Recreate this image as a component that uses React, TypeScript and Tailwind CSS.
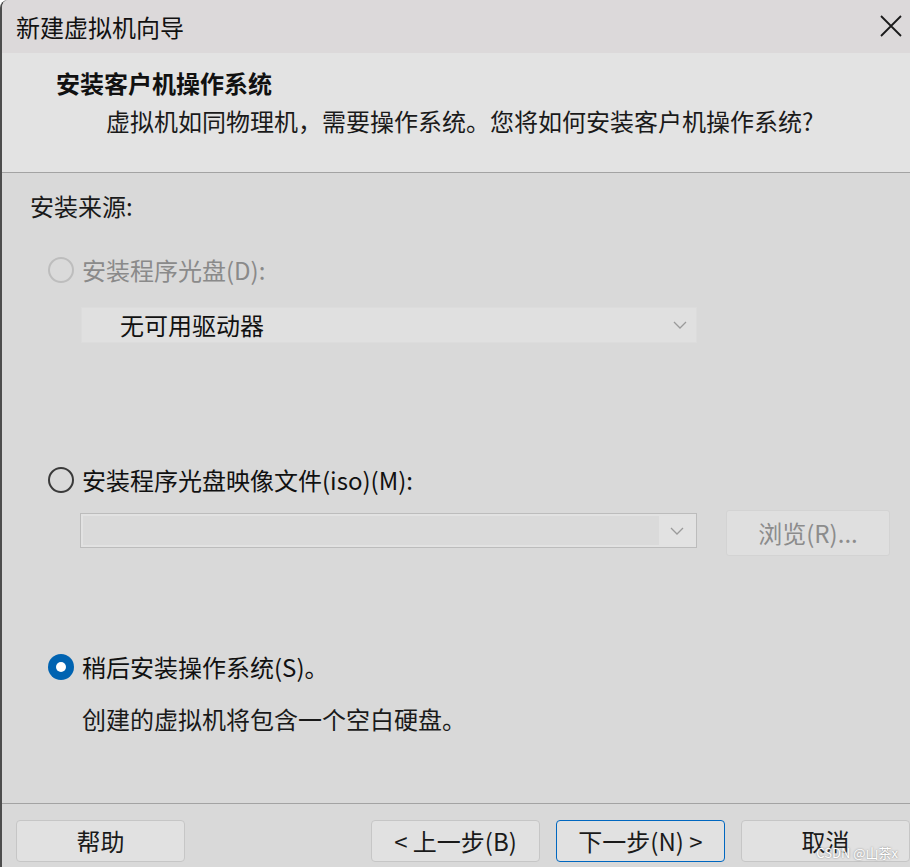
import React from "react";

const font = { fontFamily: '"Noto Sans CJK SC", "Noto Sans", sans-serif' };

function Chevron() {
  return (
    <svg width="14" height="8" viewBox="0 0 14 8" className="shrink-0">
      <path d="M1 1 L7 7 L13 1" fill="none" stroke="#9a9a9a" strokeWidth="1.3" />
    </svg>
  );
}

function Radio({ state }: { state: "disabled" | "off" | "on" }) {
  if (state === "on") {
    return (
      <span className="w-[26px] h-[26px] rounded-full bg-[#0063b1] flex items-center justify-center shrink-0">
        <span className="w-[10px] h-[10px] rounded-full bg-white" />
      </span>
    );
  }
  if (state === "disabled") {
    return <span className="w-[26px] h-[26px] rounded-full border-2 border-[#bdbdbd] bg-[#dadada] shrink-0" />;
  }
  return <span className="w-[26px] h-[26px] rounded-full border-2 border-[#3a3a3a] bg-[#d9d9d9] shrink-0" />;
}

function Btn({ children, primary }: { children: React.ReactNode; primary?: boolean }) {
  return (
    <div
      className={
        "w-[169px] h-[42px] rounded-[4px] bg-[#e1e1e1] flex items-center justify-center text-[24px] leading-none text-[#1a1a1a] border " +
        (primary ? "border-[#0067c0]" : "border-[#c6c6c6]")
      }
    >
      {children}
    </div>
  );
}

export default function App() {
  return (
    <div style={font} className="w-[910px] h-[867px] flex flex-col bg-[#d9d9d9] border-l-2 border-[#4d4d4d] rounded-tl-[8px] overflow-hidden relative text-[#1a1a1a]">
      {/* Title bar */}
      <div className="h-[53px] bg-[#dcd9da] flex items-center justify-between pl-[14px] pr-[8px] shrink-0">
        <span className="text-[24px] leading-none text-[#111]">新建虚拟机向导</span>
        <svg width="22" height="22" viewBox="0 0 22 22" className="mb-[2px]">
          <path d="M1 1 L21 21 M21 1 L1 21" stroke="#1a1a1a" strokeWidth="1.8" />
        </svg>
      </div>

      {/* Header */}
      <div className="h-[120px] bg-[#e3e3e3] border-b border-[#a3a3a3] shrink-0 pl-[54px] pt-[14px]">
        <div className="text-[24px] leading-[32px] font-bold text-[#111]">安装客户机操作系统</div>
        <div className="text-[24px] leading-[32px] ml-[50px] mt-[6px]">虚拟机如同物理机，需要操作系统。您将如何安装客户机操作系统?</div>
      </div>

      {/* Body */}
      <div className="flex-1 flex flex-col pt-[17px] pl-[28px]">
        <div className="text-[24px] leading-[32px]">安装来源:</div>

        <div className="flex items-center gap-[8px] mt-[32px] ml-[18px] h-[32px]">
          <Radio state="disabled" />
          <span className="text-[24px] text-[#8a8a8a]">安装程序光盘(D):</span>
        </div>

        <div className="mt-[21px] ml-[51px] w-[616px] h-[36px] bg-[#e0e0e0] border border-[#dcdcdc] flex items-center justify-between pl-[38px] pr-[9px]">
          <span className="text-[24px] text-[#111]">无可用驱动器</span>
          <Chevron />
        </div>

        <div className="flex items-center gap-[8px] mt-[121px] ml-[18px] h-[32px]">
          <Radio state="off" />
          <span className="text-[24px] text-[#111]">安装程序光盘映像文件(iso)(M):</span>
        </div>

        <div className="flex items-start mt-[14px] ml-[50px]">
          <div className="mt-[3px] w-[617px] h-[35px] bg-[#e2e2e2] border border-[#bcbcbc] flex items-center p-[2px]">
            <div className="flex-1 h-full bg-[#dadada]" />
            <div className="w-[35px] flex items-center justify-center">
              <Chevron />
            </div>
          </div>
          <div className="ml-[29px] w-[164px] h-[46px] rounded-[3px] bg-[#dfdfdf] border border-[#d3d3d3] flex items-center justify-center text-[24px] text-[#8c8c8c]">
            浏览(R)...
          </div>
        </div>

        <div className="flex items-center gap-[8px] mt-[95px] ml-[18px] h-[32px]">
          <Radio state="on" />
          <span className="text-[24px] text-[#111]">稍后安装操作系统(S)。</span>
        </div>

        <div className="mt-[20px] ml-[52px] text-[24px] leading-[32px]">创建的虚拟机将包含一个空白硬盘。</div>
      </div>

      {/* Footer */}
      <div className="h-[64px] border-t border-[#a3a3a3] shrink-0 flex items-start pt-[16px] pl-[14px]">
        <Btn>帮助</Btn>
        <div className="flex-1" />
        <div className="flex gap-[16px]">
          <Btn>&lt; 上一步(B)</Btn>
          <Btn primary>下一步(N) &gt;</Btn>
          <Btn>取消</Btn>
        </div>
      </div>

      <div className="absolute right-[12px] bottom-[8px] text-[13px] leading-none text-white [text-shadow:0_0_2px_#777]">
        CSDN @山茶x
      </div>
    </div>
  );
}
